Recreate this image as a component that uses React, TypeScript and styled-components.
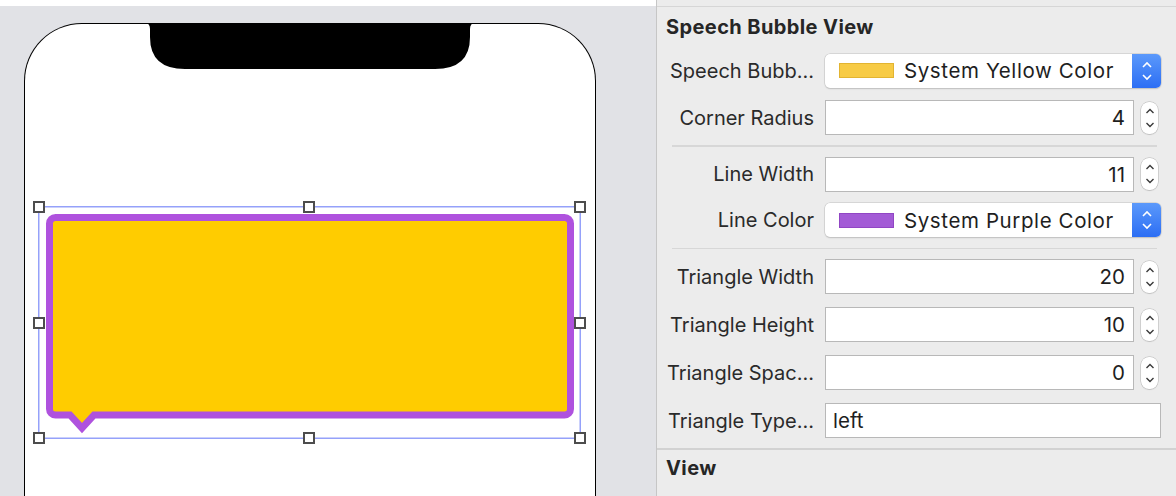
import styled, { createGlobalStyle } from 'styled-components'

const GlobalStyle = createGlobalStyle`
  html, body {
    margin: 0;
    padding: 0;
    background: #ececec;
  }
  body {
    font-family: Inter, "Liberation Sans", Arial, sans-serif;
    -webkit-font-smoothing: antialiased;
  }
`

interface IRow {
  label: string
  kind: 'popup' | 'number' | 'text'
  value: string
  swatch?: string
  swatchBorder?: string
}

const groups: { gap: number; rows: IRow[] }[] = [
  {
    gap: 12,
    rows: [
      { label: 'Speech Bubb...', kind: 'popup', value: 'System Yellow Color', swatch: '#f7cb45', swatchBorder: '#e2b431' },
      { label: 'Corner Radius', kind: 'number', value: '4' },
    ],
  },
  {
    gap: 11,
    rows: [
      { label: 'Line Width', kind: 'number', value: '11' },
      { label: 'Line Color', kind: 'popup', value: 'System Purple Color', swatch: '#a35bd6', swatchBorder: '#9146c4' },
    ],
  },
  {
    gap: 13,
    rows: [
      { label: 'Triangle Width', kind: 'number', value: '20' },
      { label: 'Triangle Height', kind: 'number', value: '10' },
      { label: 'Triangle Spac...', kind: 'number', value: '0' },
      { label: 'Triangle Type...', kind: 'text', value: 'left' },
    ],
  },
]

const handles = [
  [0, 0], [50, 0], [100, 0],
  [0, 50], [100, 50],
  [0, 100], [50, 100], [100, 100],
]

function Stepper() {
  return (
    <StepperBox>
      <svg width="10" height="24" viewBox="0 0 10 24">
        <path d="M1.5 7 L5 3.5 L8.5 7" fill="none" stroke="#3a3a3a" strokeWidth="1.4" />
        <path d="M1.5 17 L5 20.5 L8.5 17" fill="none" stroke="#3a3a3a" strokeWidth="1.4" />
      </svg>
    </StepperBox>
  )
}

function Field({ row }: { row: IRow }) {
  if (row.kind === 'popup') {
    return (
      <Popup>
        <Swatch $color={row.swatch!} $border={row.swatchBorder!} />
        <PopupText>{row.value}</PopupText>
        <PopupArrows>
          <svg width="12" height="24" viewBox="0 0 12 24">
            <path d="M2 8 L6 4 L10 8" fill="none" stroke="#fff" strokeWidth="1.6" />
            <path d="M2 16 L6 20 L10 16" fill="none" stroke="#fff" strokeWidth="1.6" />
          </svg>
        </PopupArrows>
      </Popup>
    )
  }
  if (row.kind === 'number') {
    return (
      <FieldWrap>
        <TextBox $align="right">{row.value}</TextBox>
        <Stepper />
      </FieldWrap>
    )
  }
  return (
    <FieldWrap>
      <TextBox $align="left">{row.value}</TextBox>
    </FieldWrap>
  )
}

function App() {
  return (
    <Page>
      <GlobalStyle />
      <Canvas>
        <CanvasTop />
        <Phone>
          <Notch width="330" height="46" viewBox="0 0 330 46">
            <path d="M0 0 H330 Q325 0 325 6 V14 Q325 46 290 46 H40 Q5 46 5 14 V6 Q5 0 0 0 Z" fill="#000" />
          </Notch>
          <Selection>
            <svg width="543" height="233" viewBox="0 0 543 233">
              <path
                d="M17.5 11.5 H526.5 A6 6 0 0 1 532.5 17.5 V203 A6 6 0 0 1 526.5 209 H56 L44 222 L32 209 H17.5 A6 6 0 0 1 11.5 203 V17.5 A6 6 0 0 1 17.5 11.5 Z"
                fill="#ffcc00"
                stroke="#af52de"
                strokeWidth="7"
                strokeLinejoin="miter"
              />
            </svg>
            {handles.map(([x, y]) => (
              <Handle key={`${x}-${y}`} $x={x} $y={y} />
            ))}
          </Selection>
        </Phone>
      </Canvas>
      <Inspector>
        <InspectorTop />
        <SectionTitle>Speech Bubble View</SectionTitle>
        {groups.map((g, i) => (
          <div key={i}>
            {i > 0 && <Divider />}
            <Group $gap={g.gap}>
              {g.rows.map(row => (
                <Row key={row.label}>
                  <Label>{row.label}</Label>
                  <Field row={row} />
                </Row>
              ))}
            </Group>
          </div>
        ))}
        <FullDivider />
        <SectionTitle $small>View</SectionTitle>
      </Inspector>
    </Page>
  )
}

const Page = styled.div`
  width: 1176px;
  height: 496px;
  display: flex;
  overflow: hidden;
`
const Canvas = styled.div`
  width: 656px;
  height: 496px;
  background: #e1e2e6;
  overflow: hidden;
  display: flex;
  flex-direction: column;
`
const CanvasTop = styled.div`
  height: 6px;
  background: #ffffff;
  flex-shrink: 0;
`
const Phone = styled.div`
  margin: 17px 0 0 24px;
  width: 572px;
  height: 520px;
  flex-shrink: 0;
  box-sizing: border-box;
  background: #ffffff;
  border: 1.5px solid #000;
  border-bottom: none;
  border-radius: 58px 58px 0 0;
  display: flex;
  flex-direction: column;
`
const Notch = styled.svg`
  display: block;
  align-self: center;
  margin-top: -1px;
`
const Selection = styled.div`
  position: relative;
  margin: 137px 0 0 12.5px;
  width: 543px;
  height: 233px;
  box-shadow: inset 0 0 0 1.5px #95a1fa;
  svg {
    display: block;
  }
`
const Handle = styled.div<{ $x: number; $y: number }>`
  position: absolute;
  left: calc(${p => p.$x}% + ${p => (p.$x === 0 ? 1 : p.$x === 100 ? -1 : 0)}px);
  top: calc(${p => p.$y}% + ${p => (p.$y === 0 ? 1 : p.$y === 100 ? -1 : 0)}px);
  width: 12px;
  height: 12px;
  box-sizing: border-box;
  transform: translate(-50%, -50%);
  background: #ffffff;
  border: 2px solid #4d4d4d;
`
const Inspector = styled.div`
  width: 520px;
  height: 496px;
  box-sizing: border-box;
  background: #ececec;
  border-left: 1.5px solid #c6c6c6;
  display: flex;
  flex-direction: column;
`
const InspectorTop = styled.div`
  height: 6px;
  flex-shrink: 0;
  border-bottom: 1.5px solid #d6d6d6;
`
const SectionTitle = styled.div<{ $small?: boolean }>`
  padding-left: 9px;
  height: ${p => (p.$small ? '37px' : '46px')};
  line-height: ${p => (p.$small ? '37px' : '40px')};
  font-size: 20px;
  letter-spacing: 0.4px;
  font-weight: 700;
  color: #262626;
  flex-shrink: 0;
`
const Group = styled.div<{ $gap: number }>`
  display: flex;
  flex-direction: column;
  gap: ${p => p.$gap}px;
`
const Row = styled.div`
  display: grid;
  grid-template-columns: 148px 1fr;
  column-gap: 11px;
  align-items: center;
  padding: 0 15px 0 9px;
  height: 35px;
`
const Label = styled.div`
  text-align: right;
  font-size: 20px;
  color: #2a2a2a;
  white-space: nowrap;
`
const FieldWrap = styled.div`
  display: flex;
  align-items: center;
  gap: 7px;
  height: 35px;
`
const TextBox = styled.div<{ $align: 'left' | 'right' }>`
  flex: 1;
  height: 35px;
  box-sizing: border-box;
  background: #ffffff;
  border: 1px solid #b8b8b8;
  font-size: 20.5px;
  color: #1e1e1e;
  line-height: 33px;
  text-align: ${p => p.$align};
  padding: ${p => (p.$align === 'right' ? '0 8px 0 0' : '0 0 0 7px')};
`
const StepperBox = styled.div`
  width: 17px;
  height: 32px;
  margin-right: 3px;
  box-sizing: border-box;
  background: #ffffff;
  border-radius: 8px;
  box-shadow: 0 0 0 0.5px #b5b5b5, 0 1px 1px rgba(0, 0, 0, 0.12);
  display: flex;
  align-items: center;
  justify-content: center;
`
const Popup = styled.div`
  height: 34px;
  display: flex;
  align-items: center;
  background: #ffffff;
  border-radius: 5px;
  box-shadow: 0 0 0 0.5px #c2c2c2, 0 1px 1.5px rgba(0, 0, 0, 0.18);
  overflow: hidden;
  padding-left: 14px;
`
const Swatch = styled.div<{ $color: string; $border: string }>`
  width: 55px;
  height: 15px;
  box-sizing: border-box;
  background: ${p => p.$color};
  border: 1px solid ${p => p.$border};
  flex-shrink: 0;
`
const PopupText = styled.div`
  flex: 1;
  margin-left: 10px;
  font-size: 20.5px;
  letter-spacing: 0.6px;
  color: #1e1e1e;
  white-space: nowrap;
`
const PopupArrows = styled.div`
  width: 29px;
  height: 100%;
  background: linear-gradient(#5b99fb, #2c6ef4);
  display: flex;
  align-items: center;
  justify-content: center;
`
const Divider = styled.div`
  height: 1.5px;
  background: #d7d7d7;
  margin: 10px 19px 10px 15px;
`
const FullDivider = styled.div`
  height: 1.5px;
  background: #d2d2d2;
  margin-top: 10px;
  flex-shrink: 0;
`

export default App
